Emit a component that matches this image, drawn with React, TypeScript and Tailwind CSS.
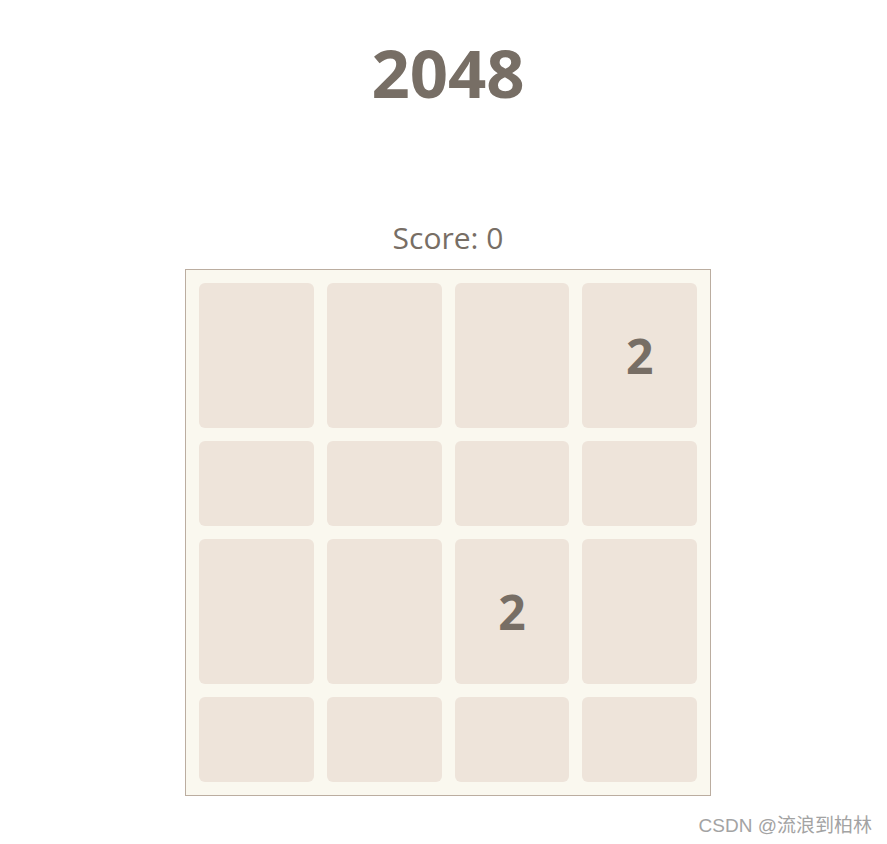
import React from "react";

// 棋盘初始状态，0 表示空格
const board: number[][] = [
  [0, 0, 0, 2],
  [0, 0, 0, 0],
  [0, 0, 2, 0],
  [0, 0, 0, 0],
];

function Tile({ value }: { value: number }) {
  return (
    <div className="flex min-h-[85px] items-center justify-center rounded-[6px] bg-[#eee4da]">
      {value !== 0 && (
        <span className="block text-[48px] font-bold leading-[145px] text-[#776e65]">
          {value}
        </span>
      )}
    </div>
  );
}

export default function App() {
  const score = 0;

  return (
    <div
      className="relative min-h-[844px] w-full bg-white"
      style={{ fontFamily: '"Open Sans", "Noto Sans", "Noto Sans CJK SC", sans-serif' }}
    >
      <div className="flex flex-col items-center pl-[9px]">
        <h1 className="mt-[31px] text-[67px] font-bold leading-[82px] text-[#776e65]">
          2048
        </h1>
        <div className="mt-[104px] text-[30px] leading-[42px] text-[#776e65]">
          Score: {score}
        </div>
        <div className="mt-[10px] grid w-[526px] grid-cols-4 gap-[13px] border border-[#bbada0] bg-[#faf8ef] p-[13px]">
          {board.map((row, r) =>
            row.map((value, c) => <Tile key={`${r}-${c}`} value={value} />)
          )}
        </div>
      </div>
      <div
        className="absolute bottom-[5px] right-[15px] text-[19px] leading-[26px] text-[#a3a3a3]"
        style={{ fontFamily: '"Liberation Sans", "Noto Sans CJK SC", sans-serif' }}
      >
        CSDN @流浪到柏林
      </div>
    </div>
  );
}
